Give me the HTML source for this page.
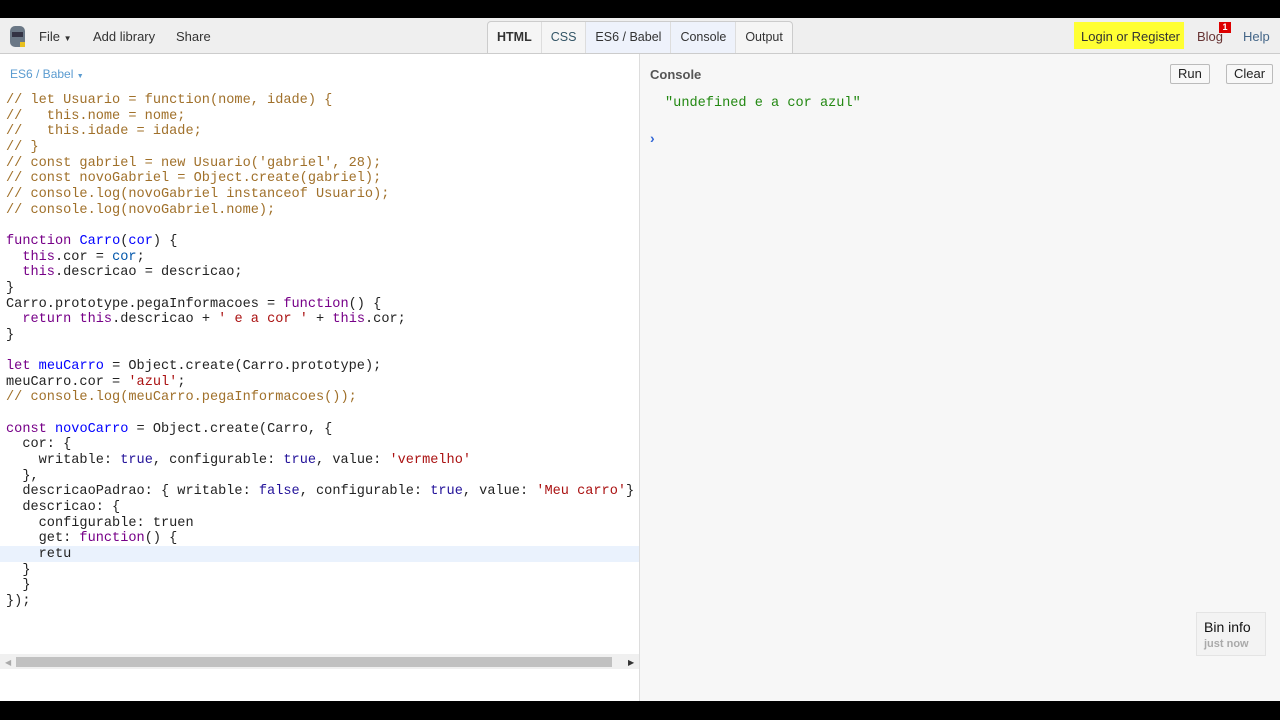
<!DOCTYPE html>
<html><head><meta charset="utf-8"><style>
*{margin:0;padding:0;box-sizing:border-box}
body{width:1280px;height:720px;overflow:hidden;background:#000;font-family:"Liberation Sans",sans-serif;position:relative}
#bar{position:absolute;top:18px;left:0;width:1280px;height:36px;background:#efefef;border-bottom:1px solid #ccc}
.t{position:absolute;top:29px;font-size:13px;color:#333}
#tabs{position:absolute;left:487px;top:21px;height:32px;border:1px solid #ccc;border-bottom:none;border-radius:4px 4px 0 0;display:flex;background:#f5f5f5}
#tabs div{padding:0 9px;line-height:31px;font-size:12.5px;border-right:1px solid #ddd;color:#333}
#tabs div.s{background:#eef2fb}
#ed{position:absolute;top:54px;left:0;width:640px;height:647px;background:#fff;border-right:1px solid #ddd}
#con{position:absolute;top:54px;left:640px;width:640px;height:647px;background:#f7f7f7}
pre{position:absolute;left:6px;top:92px;font-family:"Liberation Mono",monospace;font-size:13.6px;line-height:15.65px;color:#222}
.c{color:#a0702a}.k{color:#708}.d{color:#00f}.v{color:#05a}.s{color:#a11}.a{color:#219}
.btn{position:absolute;top:64px;height:20px;border:1px solid #bbb;background:#f8f8f8;font-size:13px;line-height:18px;padding:0 7px;color:#222;border-radius:2px}
</style></head><body>
<div id="bar">
 <div style="position:absolute;left:10px;top:8px;width:15px;height:21px;background:#6a7785;border-radius:5px"></div>
 <div style="position:absolute;left:12px;top:14px;width:11px;height:5px;background:#334"></div>
 <div style="position:absolute;left:20px;top:24px;width:5px;height:5px;background:#e8c020"></div>
</div>
<div class="t" style="left:39px">File <span style="font-size:8px">▼</span></div>
<div class="t" style="left:93px">Add library</div>
<div class="t" style="left:176px">Share</div>
<div id="tabs"><div style="font-weight:bold">HTML</div><div style="color:#356">CSS</div><div class="s">ES6 / Babel</div><div class="s">Console</div><div style="border:none">Output</div></div>
<div style="position:absolute;left:1074px;top:22px;width:110px;height:27px;background:#ff3"></div>
<div class="t" style="left:1081px">Login or Register</div>
<div class="t" style="left:1197px;color:#633">Blog</div>
<div style="position:absolute;left:1219px;top:22px;width:12px;height:11px;background:#d00;color:#fff;font-size:9px;text-align:center;line-height:11px;font-weight:bold">1</div>
<div class="t" style="left:1243px;color:#468">Help</div>
<div id="ed">
 <div style="position:absolute;left:10px;top:13px;font-size:12px;color:#5a9bd0">ES6 / Babel <span style="font-size:7px">▼</span></div>
 <div style="position:absolute;left:0;top:492px;width:639px;height:16px;background:#eaf2fd"></div>
 <div style="position:absolute;left:0;top:600px;width:639px;height:15px;background:#f0f0f0"></div>
 <div style="position:absolute;left:16px;top:603px;width:596px;height:10px;background:#c1c1c1"></div>
 <div style="position:absolute;left:5px;top:604px;font-size:8px;color:#aaa">◀</div>
 <div style="position:absolute;left:628px;top:604px;font-size:8px;color:#333">▶</div>
</div>
<pre style="top:93px"><span class="c">// let Usuario = function(nome, idade) {
//   this.nome = nome;
//   this.idade = idade;
// }
// const gabriel = new Usuario('gabriel', 28);
// const novoGabriel = Object.create(gabriel);
// console.log(novoGabriel instanceof Usuario);
// console.log(novoGabriel.nome);</span>

<span class="k">function</span> <span class="d">Carro</span>(<span class="d">cor</span>) {
  <span class="k">this</span>.cor = <span class="v">cor</span>;
  <span class="k">this</span>.descricao = descricao;
}
Carro.prototype.pegaInformacoes = <span class="k">function</span>() {
  <span class="k">return</span> <span class="k">this</span>.descricao + <span class="s">' e a cor '</span> + <span class="k">this</span>.cor;
}

<span class="k">let</span> <span class="d">meuCarro</span> = Object.create(Carro.prototype);
meuCarro.cor = <span class="s">'azul'</span>;
<span class="c">// console.log(meuCarro.pegaInformacoes());</span>

<span class="k">const</span> <span class="d">novoCarro</span> = Object.create(Carro, {
  cor: {
    writable: <span class="a">true</span>, configurable: <span class="a">true</span>, value: <span class="s">'vermelho'</span>
  },
  descricaoPadrao: { writable: <span class="a">false</span>, configurable: <span class="a">true</span>, value: <span class="s">'Meu carro'</span>}
  descricao: {
    configurable: truen
    get: <span class="k">function</span>() {
    retu
  }
  }
});</pre>
<div id="con">
 <div style="position:absolute;left:10px;top:13px;font-size:13px;font-weight:bold;color:#555">Console</div>
 <div style="position:absolute;left:25px;top:42px;font-family:'Liberation Mono',monospace;font-size:13.6px;color:#281">"undefined e a cor azul"</div>
 <div style="position:absolute;left:10px;top:76px;font-size:14px;color:#3367d6;font-weight:bold">›</div>
</div>
<div class="btn" style="left:1170px">Run</div>
<div class="btn" style="left:1226px">Clear</div>
<div style="position:absolute;left:1196px;top:612px;width:70px;height:44px;background:#f3f3f3;border:1px solid #e4e4e4"></div>
<div style="position:absolute;left:1204px;top:619px;font-size:14px;color:#111">Bin info</div>
<div style="position:absolute;left:1204px;top:638px;font-size:11px;color:#aaa;font-weight:bold">just now</div>
</body></html>
